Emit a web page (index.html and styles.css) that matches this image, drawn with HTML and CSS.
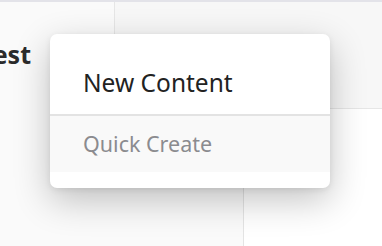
FILE: index.html
```html
<!DOCTYPE html>
<html>
<head>
<meta charset="utf-8">
<link rel="stylesheet" href="styles.css">
</head>
<body>
<div class="page">
  <div class="topbar"></div>
  <div class="header-row">
    <div class="title-cell"><h1 class="title">Latest</h1></div>
    <div class="head-right"></div>
  </div>
  <div class="body-row">
    <div class="body-left"></div>
    <div class="body-right"></div>
  </div>
  <div class="menu">
    <div class="menu-main">New Content</div>
    <div class="menu-quick">Quick Create</div>
    <div class="menu-foot"></div>
  </div>
</div>
</body>
</html>
```

FILE: styles.css
```css
html, body {
  margin: 0;
  padding: 0;
}
body {
  width: 382px;
  height: 246px;
  overflow: hidden;
  background: #fafafa;
  font-family: "Noto Sans", "Open Sans", sans-serif;
}
.page {
  position: relative;
  width: 382px;
  height: 246px;
  display: flex;
  flex-direction: column;
}
.topbar {
  height: 2px;
  background: #e3e3e9;
}
.header-row {
  display: flex;
  height: 107px;
}
.title-cell {
  width: 114px;
  background: #fafafa;
  border-right: 1px solid #e6e6e6;
  display: flex;
}
.title {
  margin: 0;
  width: 31px;
  display: flex;
  justify-content: flex-end;
  white-space: nowrap;
  font-size: 25px;
  font-weight: 700;
  color: #2b2b2b;
  padding-top: 38px;
  line-height: 28px;
}
.head-right {
  flex: 1;
  background: #f7f7f7;
  border-bottom: 1px solid #e6e6e6;
}
.body-row {
  flex: 1;
  display: flex;
}
.body-left {
  width: 243px;
  background: #fafafa;
  border-right: 1px solid #e4e4e4;
}
.body-right {
  flex: 1;
  background: #ffffff;
}
.menu {
  position: absolute;
  left: 50px;
  top: 34px;
  width: 280px;
  background: #ffffff;
  border-radius: 7px;
  overflow: hidden;
  box-shadow: 0 12px 36px rgba(0, 0, 0, 0.24), 0 2px 6px rgba(0, 0, 0, 0.08);
}
.menu-main {
  height: 82px;
  box-sizing: border-box;
  padding: 35px 0 0 33px;
  font-size: 24.5px;
  line-height: 28px;
  color: #222222;
  border-bottom: 2px solid #e3e3e3;
}
.menu-quick {
  height: 56px;
  box-sizing: border-box;
  padding: 14px 0 0 33px;
  font-size: 21.5px;
  line-height: 28px;
  color: #8b8b8f;
  background: #f9f9f9;
}
.menu-foot {
  height: 16px;
}
```
